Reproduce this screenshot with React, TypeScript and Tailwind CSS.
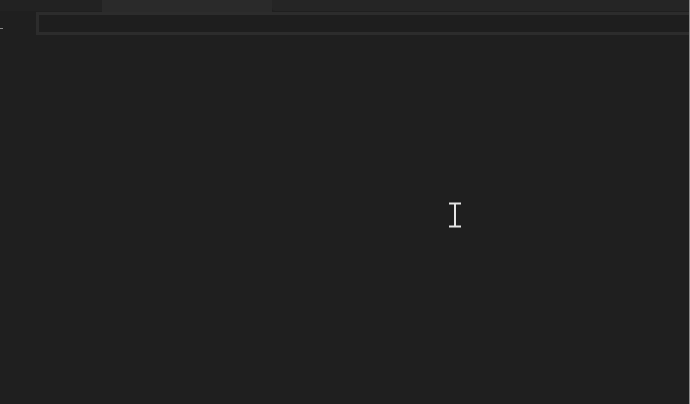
export default function App() {
  return (
    <div className="relative flex h-[404px] w-[690px] overflow-hidden bg-[#1f1f1f]">
      <div className="flex min-w-0 flex-1 flex-col">
        {/* Tab strip */}
        <div className="flex h-[12px]">
          <div className="h-[11px] w-[102px] bg-[#222222]" />
          <div className="h-[12px] w-[170px] bg-[#2a2a2a]" />
          <div className="h-[11px] flex-1 rounded-bl-[3px] bg-[#252525]" />
        </div>

        {/* Input row */}
        <div className="flex h-[23px] items-start">
          <div className="flex h-full w-[36px] items-start pt-[16px]">
            <div className="h-px w-[3px] bg-[#8a8a8a]" />
          </div>
          <div className="h-full flex-1 border-[3px] border-r-0 border-[#2c2c2c] bg-[#1e1e1e]" />
        </div>

        <div className="flex-1" />
      </div>

      {/* Scrollbar edge */}
      <div className="w-px bg-[#8c8c8c]" />

      {/* Mouse cursor */}
      <svg
        className="absolute left-[448px] top-[202px]"
        width="14"
        height="26"
        viewBox="0 0 14 26"
      >
        <path d="M1 1.5h12M1 24.5h12M7 1.5v23" stroke="#e6e6e6" strokeWidth="2" fill="none" />
      </svg>
    </div>
  );
}
